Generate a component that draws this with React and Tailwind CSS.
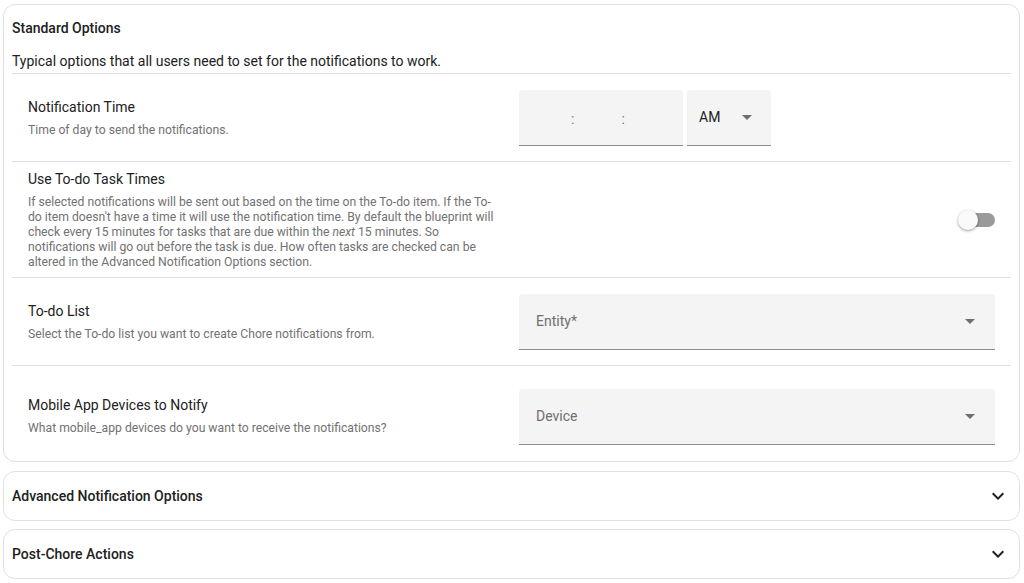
function Caret() {
    return (
        <svg width="10" height="5" viewBox="0 0 10 5" className="fill-[#6f6f6f]">
            <path d="M0 0 L10 0 L5 5 Z" />
        </svg>
    )
}

function Chevron() {
    return (
        <svg width="24" height="24" viewBox="0 0 24 24" className="fill-[#212121]">
            <path d="M7.41 8.58L12 13.17L16.59 8.58L18 10L12 16L6 10L7.41 8.58Z" />
        </svg>
    )
}

function Row({ title, children, control, last }) {
    return (
        <div className={`flex items-center px-4 ${last ? 'pt-[14px] pb-[8px]' : 'py-[7px] border-b border-[#e0e0e0]'}`}>
            <div className={`flex-1 pr-[22px] ${last ? 'mb-[3px]' : ''}`}>
                <div className="text-[14px] leading-5 text-[#212121]">{title}</div>
                <div className="mt-[6px] text-[12.2px] leading-[15px] text-[#727272]">{children}</div>
            </div>
            <div className="w-[476px] flex justify-end pt-[9px] pb-[8px]">{control}</div>
        </div>
    )
}

function SelectField({ label }) {
    return (
        <div className="w-full h-14 bg-[#f4f4f4] rounded-t-[4px] border-b border-[#8c8c8c] flex items-center justify-between pl-[17px] pr-5">
            <span className="text-[14px] text-[#6f6f6f]">{label}</span>
            <Caret />
        </div>
    )
}

function Collapsed({ title }) {
    return (
        <div className="h-[50px] border border-[#e0e0e0] rounded-xl flex items-center justify-between pl-2 pr-[9px]">
            <span className="text-[14px] font-medium text-[#212121]">{title}</span>
            <Chevron />
        </div>
    )
}

export default function App() {
    return (
        <div className="min-h-screen bg-white px-[3px] pt-1 font-['Roboto',sans-serif]">
            <div className="w-[1017px] border border-[#e0e0e0] rounded-xl px-2">
                <div className="h-[46px] flex items-center text-[14px] font-medium text-[#212121]">Standard Options</div>
                <p className="text-[14px] leading-5 text-[#212121] pb-[2px] border-b border-[#e0e0e0]">
                    Typical options that all users need to set for the notifications to work.
                </p>

                <Row
                    title="Notification Time"
                    control={
                        <div className="w-full flex gap-1">
                            <div className="w-[164px] h-14 bg-[#f4f4f4] rounded-t-[4px] border-b border-[#8c8c8c] flex items-center pl-[52px] pt-1 text-[14px] text-[#757575]">
                                <span>:</span>
                                <span className="w-[47px]" />
                                <span>:</span>
                            </div>
                            <div className="w-[84px] h-14 bg-[#f4f4f4] rounded-t-[4px] border-b border-[#8c8c8c] flex items-center justify-between pl-3 pr-[19px]">
                                <span className="text-[14px] text-[#212121]">AM</span>
                                <Caret />
                            </div>
                        </div>
                    }
                >
                    Time of day to send the notifications.
                </Row>

                <Row
                    title="Use To-do Task Times"
                    control={
                        <div className="relative w-[35px] h-[14px] rounded-full bg-[#9a9a9a]">
                            <div className="absolute -left-[2px] -top-[3px] w-5 h-5 rounded-full bg-[#fafafa] shadow-[0_1px_3px_rgba(0,0,0,0.4)]" />
                        </div>
                    }
                >
                    If selected notifications will be sent out based on the time on the To-do item. If the To-do item doesn't have a time it will use the notification time. By default the blueprint will check every 15 minutes for tasks that are due within the <em>next</em> 15 minutes. So notifications will go out before the task is due. How often tasks are checked can be altered in the Advanced Notification Options section.
                </Row>

                <Row title="To-do List" control={<SelectField label="Entity*" />}>
                    Select the To-do list you want to create Chore notifications from.
                </Row>

                <Row title="Mobile App Devices to Notify" control={<SelectField label="Device" />} last>
                    What mobile_app devices do you want to receive the notifications?
                </Row>
            </div>

            <div className="w-[1017px] mt-[9px] flex flex-col gap-2">
                <Collapsed title="Advanced Notification Options" />
                <Collapsed title="Post-Chore Actions" />
            </div>
        </div>
    )
}
